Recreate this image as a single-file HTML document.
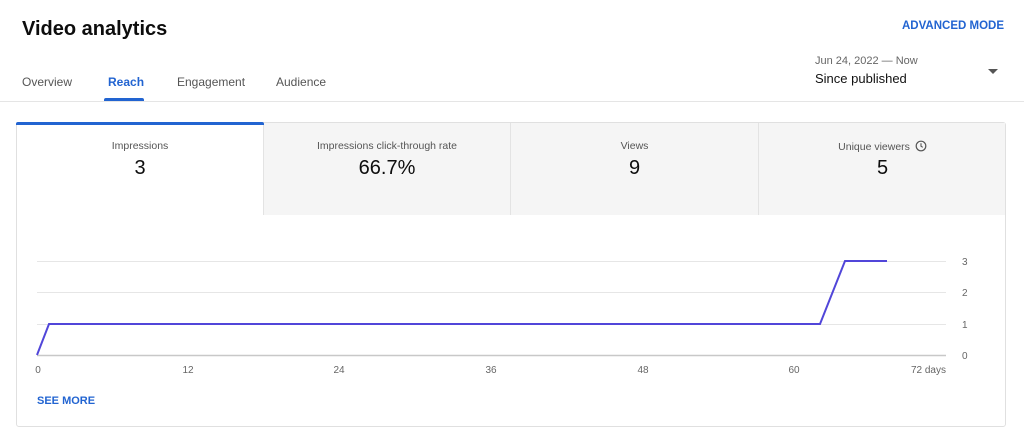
<!DOCTYPE html>
<html><head><style>
*{margin:0;padding:0;box-sizing:border-box}
body{width:1024px;height:437px;background:#fff;font-family:"Liberation Sans",Arial,sans-serif;position:relative;overflow:hidden;color:#0d0d0d}
.a{position:absolute;white-space:nowrap}
</style></head><body>
<div class="a" style="left:22px;top:18px;font-size:20px;font-weight:bold;color:#0d0d0d">Video analytics</div>
<div class="a" style="left:902px;top:20px;font-size:11.5px;font-weight:bold;color:#2264d1;letter-spacing:0px">ADVANCED MODE</div>
<div class="a" style="left:22px;top:75px;font-size:12px;color:#555">Overview</div>
<div class="a" style="left:108px;top:75px;font-size:12px;color:#2264d1;font-weight:bold">Reach</div>
<div class="a" style="left:104px;top:98px;width:40px;height:3px;background:#2264d1;border-radius:2px 2px 0 0"></div>
<div class="a" style="left:177px;top:75px;font-size:12px;color:#555">Engagement</div>
<div class="a" style="left:276px;top:75px;font-size:12px;color:#555">Audience</div>
<div class="a" style="left:815px;top:55px;font-size:11px;color:#666">Jun 24, 2022 — Now</div>
<div class="a" style="left:815px;top:71px;font-size:13px;color:#111">Since published</div>
<div class="a" style="left:988px;top:69px;width:0;height:0;border-left:5px solid transparent;border-right:5px solid transparent;border-top:5px solid #555"></div>
<div class="a" style="left:0;top:101px;width:1024px;height:1px;background:#e5e5e5"></div>

<div class="a" style="left:16px;top:122px;width:990px;height:305px;border:1px solid #e0e0e0;border-radius:3px"></div>
<div class="a" style="left:264px;top:123px;width:741px;height:92px;background:#f5f5f5"></div>
<div class="a" style="left:510px;top:123px;width:1px;height:92px;background:#e3e3e3"></div>
<div class="a" style="left:758px;top:123px;width:1px;height:92px;background:#e3e3e3"></div>
<div class="a" style="left:263px;top:123px;width:1px;height:92px;background:#e3e3e3"></div>
<div class="a" style="left:16px;top:122px;width:248px;height:3px;background:#2264d1;border-radius:2px 2px 0 0"></div>

<div class="a" style="left:16px;top:140px;width:248px;text-align:center;font-size:10.5px;color:#555">Impressions</div>
<div class="a" style="left:16px;top:157px;width:248px;text-align:center;font-size:20px">3</div>
<div class="a" style="left:264px;top:140px;width:246px;text-align:center;font-size:10.5px;color:#555">Impressions click-through rate</div>
<div class="a" style="left:264px;top:157px;width:246px;text-align:center;font-size:20px">66.7%</div>
<div class="a" style="left:511px;top:140px;width:247px;text-align:center;font-size:10.5px;color:#555">Views</div>
<div class="a" style="left:511px;top:157px;width:247px;text-align:center;font-size:20px">9</div>
<div class="a" style="left:759px;top:140px;width:247px;text-align:center;font-size:10.5px;color:#555">Unique viewers <svg width="12" height="12" viewBox="0 0 12 12" style="vertical-align:-2px;margin-left:2px"><circle cx="6" cy="6" r="4.8" fill="none" stroke="#555" stroke-width="1.2"/><path d="M6 3.3V6.2L7.8 7.3" fill="none" stroke="#555" stroke-width="1.1"/></svg></div>
<div class="a" style="left:759px;top:157px;width:247px;text-align:center;font-size:20px">5</div>

<svg class="a" style="left:0;top:0" width="1024" height="437">
<g stroke="#e6e6e6" stroke-width="1"><line x1="37" y1="261.5" x2="946" y2="261.5"/><line x1="37" y1="292.5" x2="946" y2="292.5"/><line x1="37" y1="324.5" x2="946" y2="324.5"/></g>
<line x1="37" y1="355.5" x2="946" y2="355.5" stroke="#c8c8c8" stroke-width="1.5"/>
<polyline points="37,355 49,324 820,324 845,261 887,261" fill="none" stroke="#5146d9" stroke-width="2"/>
<g font-family="Liberation Sans,Arial,sans-serif" font-size="10" fill="#666">
<text x="38" y="373" text-anchor="middle">0</text><text x="188" y="373" text-anchor="middle">12</text><text x="339" y="373" text-anchor="middle">24</text><text x="491" y="373" text-anchor="middle">36</text><text x="643" y="373" text-anchor="middle">48</text><text x="794" y="373" text-anchor="middle">60</text><text x="946" y="373" text-anchor="end">72 days</text>
<text x="962" y="265">3</text><text x="962" y="296">2</text><text x="962" y="328">1</text><text x="962" y="359">0</text>
</g></svg>
<div class="a" style="left:37px;top:395px;font-size:11px;font-weight:bold;color:#2264d1">SEE MORE</div>
</body></html>
